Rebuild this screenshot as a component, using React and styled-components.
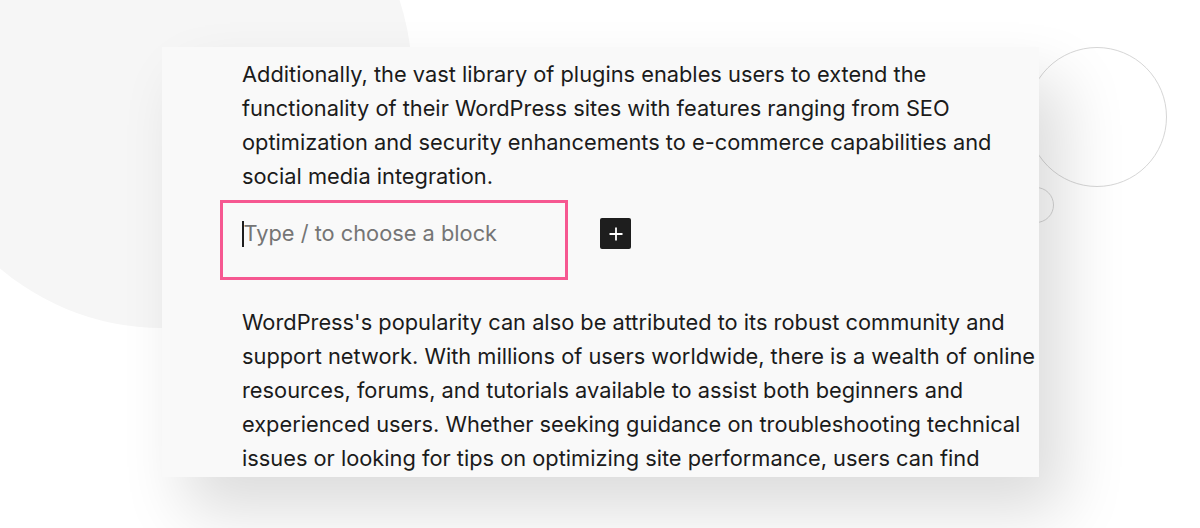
import React from "react";
import styled, { createGlobalStyle } from "styled-components";

const GlobalStyle = createGlobalStyle`
    html, body {
        margin: 0;
        padding: 0;
        background: #ffffff;
    }
    body {
        font-family: Inter, "Noto Sans", sans-serif;
        overflow: hidden;
    }
`;

const Stage = styled.div`
    position: relative;
    width: 1200px;
    height: 528px;
    overflow: hidden;
    background: #ffffff;
    padding-top: 47px;
    box-sizing: border-box;
`;

// background decoration
const Blob = styled.div`
    position: absolute;
    left: -88px;
    top: -172px;
    width: 500px;
    height: 500px;
    border-radius: 50%;
    background: #f6f6f6;
`;

const Ring = styled.div`
    position: absolute;
    left: ${p => p.x - p.r}px;
    top: ${p => p.y - p.r}px;
    width: ${p => p.r * 2}px;
    height: ${p => p.r * 2}px;
    border-radius: 50%;
    border: 1px solid #d6d6d6;
    background: rgba(255, 255, 255, 0.35);
    box-sizing: border-box;
`;

const Card = styled.div`
    position: relative;
    z-index: 1;
    margin-left: 162px;
    width: 877px;
    height: 430px;
    overflow: hidden;
    background: #f9f9f9;
    box-shadow: 24px 34px 60px rgba(0, 0, 0, 0.14);
    padding: 10px 0 0 80px;
    box-sizing: border-box;
`;

const Paragraph = styled.p`
    margin: 0;
    width: 795px;
    font-size: 21.8px;
    line-height: 34px;
    color: #1b1b1b;
`;

const BlockRow = styled.div`
    display: flex;
    align-items: flex-start;
    gap: 32px;
    margin: 7px 0 25px -22px;
`;

const Appender = styled.div`
    width: 348px;
    height: 80px;
    border: 3px solid #f65891;
    box-sizing: border-box;
    padding: 13px 0 0 19px;
    display: flex;
    align-items: flex-start;
`;

const Caret = styled.span`
    display: inline-block;
    width: 1.5px;
    height: 26px;
    margin-top: 5px;
    background: #1e1e1e;
`;

const Placeholder = styled.span`
    font-size: 21.8px;
    line-height: 34px;
    color: #757575;
`;

const AddButton = styled.button`
    width: 31px;
    height: 31px;
    margin-top: 18px;
    padding: 0;
    border: none;
    border-radius: 2px;
    background: #1e1e1e;
    display: flex;
    align-items: center;
    justify-content: center;
    cursor: pointer;
`;

const App = () => {
    return (
        <>
            <GlobalStyle />
            <Stage>
                <Blob />
                <Ring x={1097} y={117} r={70} />
                <Ring x={1036} y={205} r={18} />
                <Card>
                    <Paragraph>
                        Additionally, the vast library of plugins enables users to extend the
                        functionality of their WordPress sites with features ranging from SEO
                        optimization and security enhancements to e-commerce capabilities and
                        social media integration.
                    </Paragraph>
                    <BlockRow>
                        <Appender>
                            <Caret />
                            <Placeholder>Type / to choose a block</Placeholder>
                        </Appender>
                        <AddButton aria-label="Add block">
                            <svg width="16" height="16" viewBox="0 0 16 16">
                                <path d="M8 1.5v13M1.5 8h13" stroke="#fff" strokeWidth="1.8" />
                            </svg>
                        </AddButton>
                    </BlockRow>
                    <Paragraph>
                        WordPress's popularity can also be attributed to its robust community and
                        support network. With millions of users worldwide, there is a wealth of online
                        resources, forums, and tutorials available to assist both beginners and
                        experienced users. Whether seeking guidance on troubleshooting technical
                        issues or looking for tips on optimizing site performance, users can find
                    </Paragraph>
                </Card>
            </Stage>
        </>
    );
};

export default App;
